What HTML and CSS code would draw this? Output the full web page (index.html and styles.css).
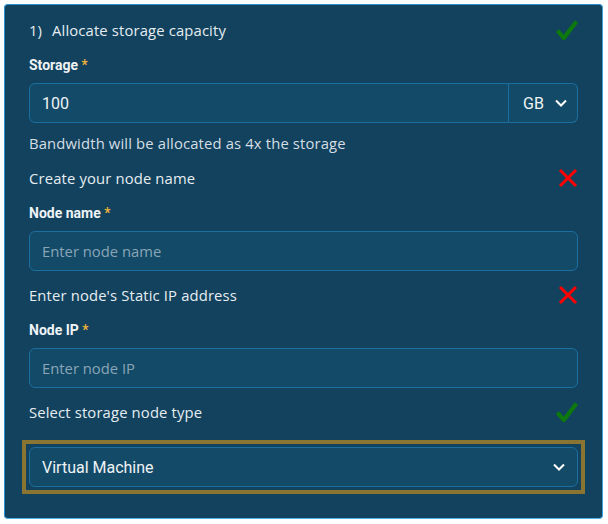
FILE: index.html
```html
<!DOCTYPE html>
<html>
<head>
<meta charset="utf-8">
<link rel="stylesheet" href="styles.css">
</head>
<body>
<div class="card">
  <div class="row heading-row">
    <span class="text"><span class="num">1)</span>Allocate storage capacity</span>
    <svg class="icon" width="22" height="20" viewBox="0 0 22 20"><path d="M1.5 10.5 L7.8 18 L20.5 1.5" fill="none" stroke="#0c780d" stroke-width="4.2" stroke-linejoin="miter"/></svg>
  </div>
  <div class="label label-storage">Storage <span class="req">*</span></div>
  <div class="input-group">
    <div class="field value">100</div>
    <div class="addon">GB
      <svg width="12" height="8" viewBox="0 0 12 8"><path d="M1 1.5 L6 6.5 L11 1.5" fill="none" stroke="#ffffff" stroke-width="2"/></svg>
    </div>
  </div>
  <div class="row hint">
    <span class="text">Bandwidth will be allocated as 4x the storage</span>
  </div>
  <div class="row step">
    <span class="text">Create your node name</span>
    <svg class="icon" width="20" height="20" viewBox="0 0 20 20"><path d="M2 2 L18 18 M18 2 L2 18" fill="none" stroke="#ff0000" stroke-width="3"/></svg>
  </div>
  <div class="label">Node name <span class="req">*</span></div>
  <div class="field placeholder">Enter node name</div>
  <div class="row step2">
    <span class="text">Enter node's Static IP address</span>
    <svg class="icon" width="20" height="20" viewBox="0 0 20 20"><path d="M2 2 L18 18 M18 2 L2 18" fill="none" stroke="#ff0000" stroke-width="3"/></svg>
  </div>
  <div class="label">Node IP <span class="req">*</span></div>
  <div class="field placeholder">Enter node IP</div>
  <div class="row step2">
    <span class="text">Select storage node type</span>
    <svg class="icon" width="22" height="20" viewBox="0 0 22 20"><path d="M1.5 10.5 L7.8 18 L20.5 1.5" fill="none" stroke="#0c780d" stroke-width="4.2" stroke-linejoin="miter"/></svg>
  </div>
  <div class="focus-ring">
    <div class="field select">
      <span>Virtual Machine</span>
      <svg width="12" height="8" viewBox="0 0 12 8"><path d="M1 1.5 L6 6.5 L11 1.5" fill="none" stroke="#ffffff" stroke-width="2"/></svg>
    </div>
  </div>
</div>
</body>
</html>
```

FILE: styles.css
```css
html, body {
  margin: 0;
  padding: 0;
  background: #ffffff;
}
body {
  padding: 4px;
}
.card {
  box-sizing: border-box;
  width: 599px;
  height: 515px;
  background: #12425d;
  border: 1px solid #2a8fcf;
  border-bottom-color: #4fb4ea;
  border-right-color: #3aa3e0;
  border-radius: 4px;
  padding: 13px 24px 23px 24px;
  font-family: "Open Sans", "Noto Sans", sans-serif;
  color: #e6edf2;
}
.row {
  display: flex;
  align-items: center;
  justify-content: space-between;
  height: 24px;
  font-size: 14.8px;
  letter-spacing: 0.15px;
}
.num {
  display: inline-block;
  width: 23px;
}
.icon {
  display: block;
}
.label {
  height: 20px;
  line-height: 20px;
  font-family: Roboto, "Liberation Sans", sans-serif;
  font-weight: 700;
  font-size: 14px;
  color: #eef3f6;
  margin-top: 13px;
}
.req {
  color: #f2b53a;
  font-weight: 500;
}
.field {
  box-sizing: border-box;
  height: 40px;
  border: 1px solid #1b6fa0;
  border-radius: 6px;
  background: #134a67;
  padding: 0 12px;
  display: flex;
  align-items: center;
  font-family: Roboto, "Liberation Sans", sans-serif;
  font-size: 16px;
  margin-top: 8px;
}
.placeholder {
  font-family: "Open Sans", "Noto Sans", sans-serif;
  font-size: 14.8px;
  color: #8aa5b7;
}
.input-group {
  display: flex;
  margin-top: 8px;
  height: 40px;
}
.input-group .field {
  flex: 1;
  margin-top: 0;
  border-radius: 6px 0 0 6px;
  color: #eef3f6;
}
.addon {
  box-sizing: border-box;
  width: 69px;
  height: 40px;
  border: 1px solid #1b6fa0;
  border-left: none;
  border-radius: 0 6px 6px 0;
  background: #134a67;
  display: flex;
  align-items: center;
  gap: 11px;
  padding-left: 14px;
  font-family: Roboto, "Liberation Sans", sans-serif;
  font-size: 16px;
  color: #eef3f6;
}
.hint {
  margin-top: 8px;
  color: #d5dee5;
}
.step {
  margin-top: 11px;
}
.step2 {
  margin-top: 12px;
}
.focus-ring {
  margin: 16px -7px 0 -7px;
  border: 4px solid #8a7431;
  padding: 3px;
}
.select {
  margin-top: 0;
  justify-content: space-between;
  color: #eef3f6;
  padding: 0 12px;
}
```
